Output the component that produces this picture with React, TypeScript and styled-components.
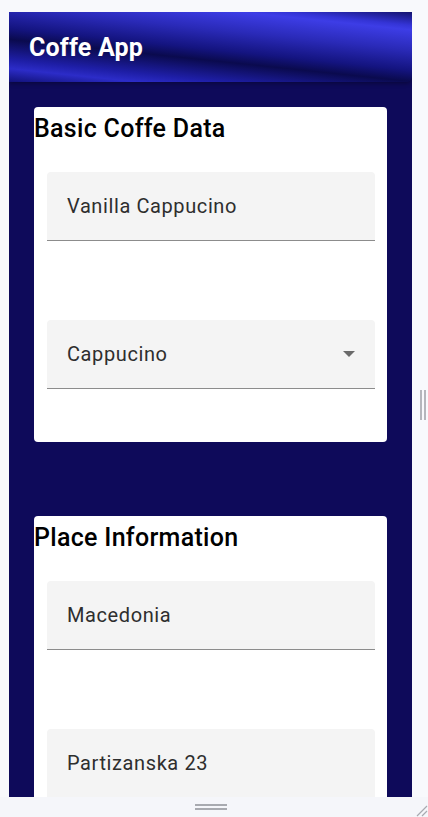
import React from "react";
import styled, { createGlobalStyle } from "styled-components";

const GlobalStyle = createGlobalStyle`
  html, body {
    margin: 0;
    padding: 0;
    background-color: #f8f9fc;
    font-family: Roboto, "Liberation Sans", sans-serif;
  }
`;

const Screen = styled.div`
  width: 428px;
  height: 817px;
  display: grid;
  grid-template-columns: 9px 403px 16px;
  grid-template-rows: 12px 785px 20px;
  background-color: #f8f9fc;
  overflow: hidden;
`;

const Device = styled.div`
  grid-column: 2;
  grid-row: 2;
  display: flex;
  flex-direction: column;
  background-color: #0e0a5a;
  overflow: hidden;
`;

const SideHandle = styled.div`
  grid-column: 3;
  grid-row: 2;
  display: flex;
  align-items: center;
  justify-content: center;
  gap: 2px;
  padding-left: 6px;

  span {
    width: 2px;
    height: 30px;
    background-color: #b4b6bc;
  }
`;

const BottomBar = styled.div`
  grid-column: 1 / 4;
  grid-row: 3;
  position: relative;
  display: flex;
  flex-direction: column;
  align-items: center;
  justify-content: center;
  gap: 2px;
  padding-right: 6px;
  background-color: #f5f6fa;

  span {
    width: 32px;
    height: 2px;
    background-color: #a8aab0;
  }
`;

const CornerGrip = styled.svg`
  position: absolute;
  right: 0;
  bottom: 0;
`;

const Header = styled.header`
  height: 70px;
  flex-shrink: 0;
  display: flex;
  align-items: center;
  padding-left: 20px;
  border-bottom-right-radius: 6px;
  background: linear-gradient(
    186deg,
    #14136e 0%,
    #3434d6 12%,
    #3d3de6 16%,
    #2a2ab8 34%,
    #141480 52%,
    #0a0a4e 62%,
    #1e1ea6 80%,
    #2c2cc8 88%,
    #12127a 100%
  );
  box-shadow: 0 2px 4px rgba(0, 0, 0, 0.3);
`;

const AppTitle = styled.h1`
  margin: 0;
  color: #ffffff;
  font-size: 25px;
  font-weight: 700;
  letter-spacing: 0.2px;
`;

const Content = styled.main`
  display: flex;
  flex-direction: column;
  gap: 74px;
  padding: 25px 25px 0 25px;
`;

const Card = styled.section`
  background-color: #ffffff;
  border-radius: 4px;
  padding-bottom: 53px;
  display: flex;
  flex-direction: column;
`;

const CardTitle = styled.h2`
  margin: 0;
  height: 65px;
  font-size: 25px;
  font-weight: 500;
  line-height: 44px;
  letter-spacing: 0.3px;
  color: #000000;
`;

const Fields = styled.div`
  display: flex;
  flex-direction: column;
  gap: 79px;
  padding: 0 12px 0 13px;
`;

const Field = styled.div`
  height: 69px;
  box-sizing: border-box;
  display: flex;
  align-items: center;
  justify-content: space-between;
  padding: 0 20px;
  background-color: #f4f4f4;
  border-radius: 4px 4px 0 0;
  border-bottom: 1px solid #8c8c8c;
  font-size: 20px;
  letter-spacing: 0.6px;
  color: #2e2e2e;
`;

const Arrow = styled.span`
  width: 0;
  height: 0;
  border-left: 6px solid transparent;
  border-right: 6px solid transparent;
  border-top: 6px solid #6a6a6a;
`;

const cards = [
  {
    title: "Basic Coffe Data",
    fields: [
      { value: "Vanilla Cappucino", select: false },
      { value: "Cappucino", select: true },
    ],
  },
  {
    title: "Place Information",
    fields: [
      { value: "Macedonia", select: false },
      { value: "Partizanska 23", select: false },
    ],
  },
];

export default function App() {
  return (
    <>
      <GlobalStyle />
      <Screen>
        <Device>
          <Header>
            <AppTitle>Coffe App</AppTitle>
          </Header>
          <Content>
            {cards.map((card) => (
              <Card key={card.title}>
                <CardTitle>{card.title}</CardTitle>
                <Fields>
                  {card.fields.map((f) => (
                    <Field key={f.value}>
                      <span>{f.value}</span>
                      {f.select && <Arrow />}
                    </Field>
                  ))}
                </Fields>
              </Card>
            ))}
          </Content>
        </Device>
        <SideHandle>
          <span />
          <span />
        </SideHandle>
        <BottomBar>
          <span />
          <span />
          <CornerGrip width="14" height="14" viewBox="0 0 14 14">
            <path d="M13 3 L3 13 M13 8 L8 13" stroke="#a8aab0" strokeWidth="1.2" />
          </CornerGrip>
        </BottomBar>
      </Screen>
    </>
  );
}
